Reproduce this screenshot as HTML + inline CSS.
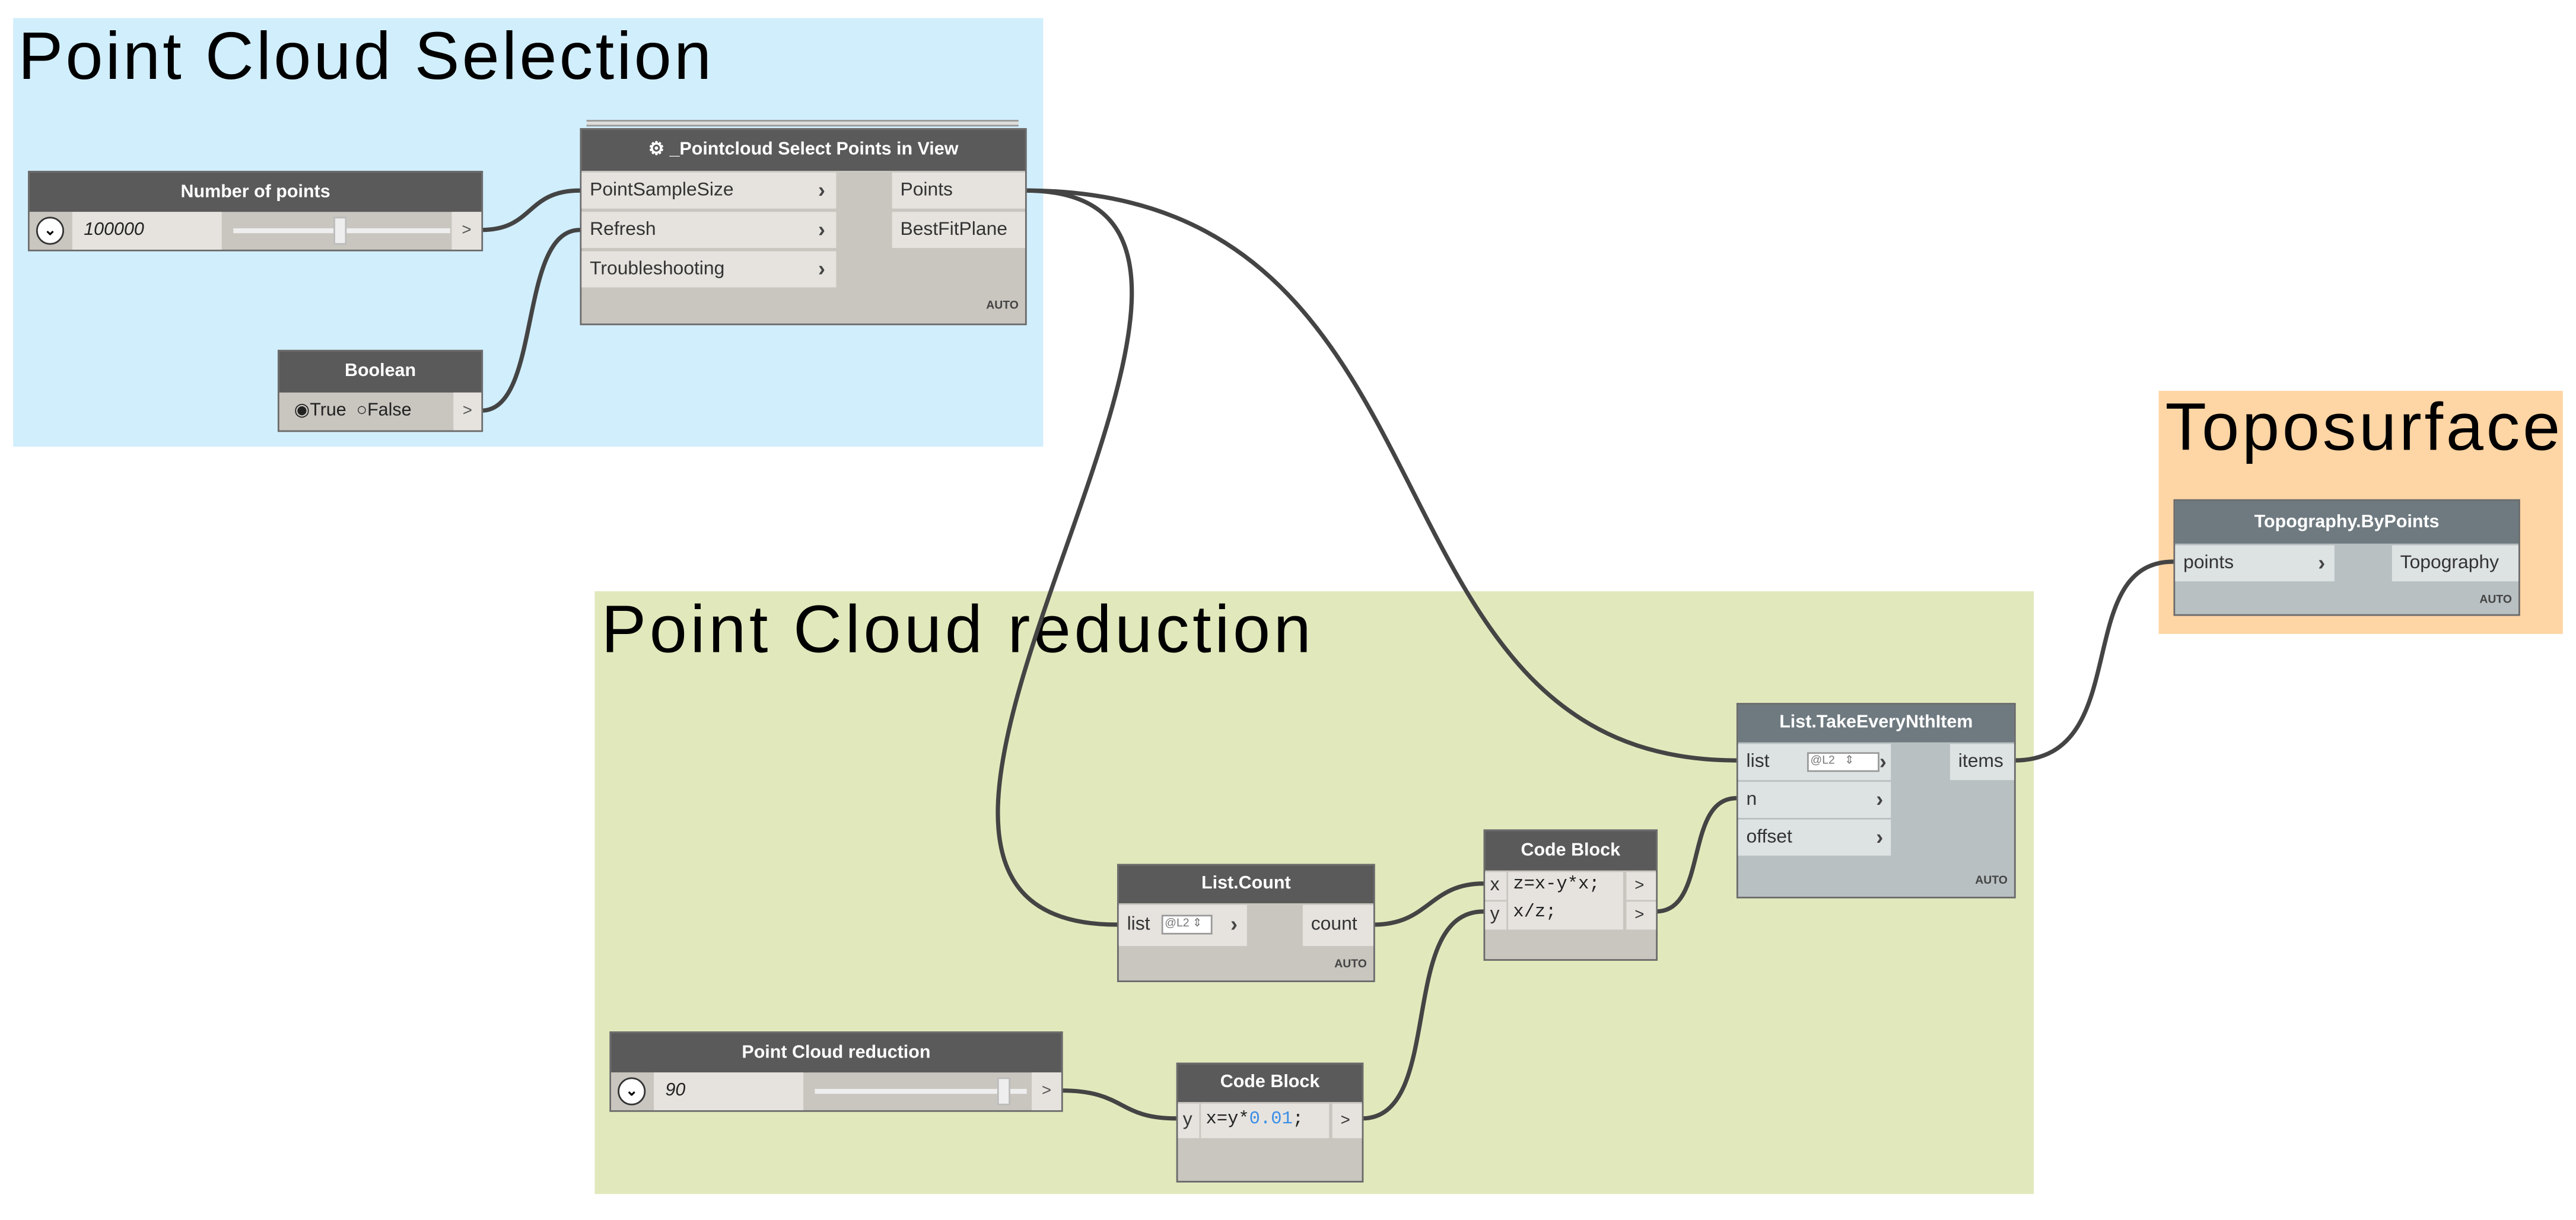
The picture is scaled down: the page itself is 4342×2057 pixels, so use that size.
<!DOCTYPE html>
<html><head><meta charset="utf-8"><style>
html,body{margin:0;padding:0;background:#fff;width:4342px;height:2056px;overflow:hidden}
#s{position:absolute;left:0;top:0;width:1568px;height:743px;transform:scale(2.7691);transform-origin:0 0;font-family:"Liberation Sans",sans-serif}
.a{position:absolute;box-sizing:border-box}
.g{position:absolute}
.t{position:absolute;font-size:41px;color:#000;white-space:nowrap;letter-spacing:1.5px}
.n{position:absolute;box-sizing:border-box;background:#c9c5bf;border:1px solid #6a6a6a}
.nb{background:#b8c0c2}
.h{position:absolute;left:0;right:0;top:0;background:#5a5a5a;color:#fff;font-size:11px;font-weight:bold;text-align:center}
.hb{background:#6e7a80}
.r{position:absolute;background:#e6e3df;font-size:11.5px;color:#333;white-space:nowrap;box-sizing:border-box;padding-left:5px}
.rb{background:#dde2e3}
.auto{position:absolute;right:4px;font-size:7px;font-weight:bold;color:#444}
.ch{position:absolute;font-weight:bold;font-size:13px;color:#444}
.lv{position:absolute;background:#fff;border:1px solid #999;font-size:7px;color:#777;box-sizing:border-box;padding-left:1px;line-height:10px}
.mono{font-family:"Liberation Mono",monospace;font-size:11px}
</style></head><body><div id="s">
<div class="g" style="left:8px;top:11px;width:627px;height:261px;background:#d1eefc"></div>
<div class="t" style="left:11px;top:11px">Point Cloud Selection</div>
<div class="g" style="left:362px;top:360px;width:876px;height:367px;background:#e1e9bc"></div>
<div class="t" style="left:366px;top:360px;letter-spacing:2px">Point Cloud reduction</div>
<div class="g" style="left:1314px;top:238px;width:246px;height:148px;background:#fed5a4"></div>
<div class="t" style="left:1318px;top:237px;letter-spacing:1.7px">Toposurface</div>

<svg class="g" style="left:0;top:0" width="1568" height="743" fill="none" stroke="#444" stroke-width="2.6">
<path d="M293,140 C325,140 320,116 353,116"/>
<path d="M293,250 C330,250 315,140 353,140"/>
<path d="M624,116 C900,116 820,463 1057,463"/>
<path d="M624,116 C830,116 460,563 680,563"/>
<path d="M836,563 C870,563 870,538 903,538"/>
<path d="M829,681 C880,681 850,555 903,555"/>
<path d="M1008,555 C1040,555 1025,486 1057,486"/>
<path d="M1226,463 C1300,463 1260,342 1323,342"/>
<path d="M646,664 C685,664 680,681 716,681"/>
</svg>

<div class="n" style="left:17px;top:104px;width:277px;height:49px">
 <div class="h" style="height:24px;line-height:24px">Number of points</div>
 <div class="a" style="left:0;top:24px;width:26px;height:23px;background:#c9c5bf"><div class="a" style="left:4px;top:3px;width:17px;height:17px;border:1.3px solid #333;border-radius:50%;background:#fff;font-size:9px;text-align:center;line-height:15px;font-weight:bold">⌄</div></div>
 <div class="a" style="left:26px;top:24px;width:91px;height:23px;background:#e6e3df;font-size:11px;font-style:italic;line-height:23px;padding-left:7px;color:#222">100000</div>
 <div class="a" style="left:124px;top:34px;width:132px;height:3px;background:#eee"></div>
 <div class="a" style="left:185px;top:27px;width:8px;height:17px;background:#eee;border:1px solid #bbb"></div>
 <div class="a" style="left:257px;top:24px;width:18px;height:23px;background:#e6e3df;font-size:10px;line-height:23px;text-align:center;color:#555">&gt;</div>
</div>

<div class="n" style="left:169px;top:213px;width:125px;height:50px">
 <div class="h" style="height:25px;line-height:25px">Boolean</div>
 <div class="a" style="left:0;top:25px;width:106px;height:23px;font-size:11px;line-height:23px;padding-left:9px;color:#222">◉True &nbsp;○False</div>
 <div class="a" style="left:106px;top:25px;width:17px;height:23px;background:#e6e3df;font-size:10px;line-height:23px;text-align:center;color:#555">&gt;</div>
</div>

<div class="a" style="left:357px;top:73px;width:263px;height:4px;border-top:1px solid #999;border-bottom:1px solid #999;background:#ddd"></div>
<div class="n" style="left:353px;top:78px;width:272px;height:120px">
 <div class="h" style="height:25px;line-height:25px">⚙ _Pointcloud Select Points in View</div>
 <div class="r" style="left:0;top:26px;width:155px;height:22px;line-height:22px">PointSampleSize</div><div class="ch" style="left:144px;top:29px">›</div>
 <div class="r" style="left:0;top:50px;width:155px;height:22px;line-height:22px">Refresh</div><div class="ch" style="left:144px;top:53px">›</div>
 <div class="r" style="left:0;top:74px;width:155px;height:22px;line-height:22px">Troubleshooting</div><div class="ch" style="left:144px;top:77px">›</div>
 <div class="r" style="left:189px;top:26px;width:81px;height:22px;line-height:22px">Points</div>
 <div class="r" style="left:189px;top:50px;width:81px;height:22px;line-height:22px">BestFitPlane</div>
 <div class="auto" style="top:104px">AUTO</div>
</div>

<div class="n" style="left:680px;top:526px;width:157px;height:72px">
 <div class="h" style="height:23px;line-height:23px">List.Count</div>
 <div class="r" style="left:0;top:24px;width:78px;height:25px;line-height:25px">list</div>
 <div class="lv" style="left:26px;top:30px;width:31px;height:12px">@L2 ⇕</div><div class="ch" style="left:68px;top:28px">›</div>
 <div class="r" style="left:112px;top:24px;width:43px;height:25px;line-height:25px">count</div>
 <div class="auto" style="top:57px">AUTO</div>
</div>

<div class="n" style="left:903px;top:505px;width:106px;height:80px">
 <div class="h" style="height:24px;line-height:24px">Code Block</div>
 <div class="r" style="left:0;top:25px;width:13px;height:17px;line-height:17px;padding-left:3px">x</div>
 <div class="r" style="left:0;top:43px;width:13px;height:17px;line-height:17px;padding-left:3px">y</div>
 <div class="r mono" style="left:14px;top:25px;width:70px;height:35px;line-height:17px;padding-left:3px;color:#222">z=x-y*x;<br>x/z;</div>
 <div class="r" style="left:86px;top:25px;width:18px;height:17px;line-height:17px;font-size:10px">&gt;</div>
 <div class="r" style="left:86px;top:43px;width:18px;height:17px;line-height:17px;font-size:10px">&gt;</div>
</div>

<div class="n" style="left:371px;top:628px;width:276px;height:49px">
 <div class="h" style="height:24px;line-height:24px">Point Cloud reduction</div>
 <div class="a" style="left:0;top:24px;width:26px;height:23px;background:#c9c5bf"><div class="a" style="left:4px;top:3px;width:17px;height:17px;border:1.3px solid #333;border-radius:50%;background:#fff;font-size:9px;text-align:center;line-height:15px;font-weight:bold">⌄</div></div>
 <div class="a" style="left:26px;top:24px;width:91px;height:23px;background:#e6e3df;font-size:11px;font-style:italic;line-height:23px;padding-left:7px;color:#222">90</div>
 <div class="a" style="left:124px;top:34px;width:129px;height:3px;background:#eee"></div>
 <div class="a" style="left:235px;top:27px;width:8px;height:17px;background:#eee;border:1px solid #bbb"></div>
 <div class="a" style="left:256px;top:24px;width:18px;height:23px;background:#e6e3df;font-size:10px;line-height:23px;text-align:center;color:#555">&gt;</div>
</div>

<div class="n" style="left:716px;top:647px;width:114px;height:73px">
 <div class="h" style="height:23px;line-height:23px">Code Block</div>
 <div class="r" style="left:0;top:24px;width:13px;height:21px;line-height:21px;padding-left:3px">y</div>
 <div class="r mono" style="left:14px;top:24px;width:78px;height:21px;line-height:21px;padding-left:3px;color:#222">x=y*<span style="color:#3a8ee6">0.01</span>;</div>
 <div class="r" style="left:94px;top:24px;width:18px;height:21px;line-height:21px;font-size:10px">&gt;</div>
</div>

<div class="n nb" style="left:1057px;top:428px;width:170px;height:119px">
 <div class="h hb" style="height:23px;line-height:23px">List.TakeEveryNthItem</div>
 <div class="r rb" style="left:0;top:24px;width:93px;height:22px;line-height:22px">list</div>
 <div class="lv" style="left:42px;top:29px;width:44px;height:12px">@L2 &nbsp;&nbsp;⇕</div><div class="ch" style="left:86px;top:27px">›</div>
 <div class="r rb" style="left:0;top:47px;width:93px;height:22px;line-height:22px">n</div><div class="ch" style="left:84px;top:50px">›</div>
 <div class="r rb" style="left:0;top:70px;width:93px;height:22px;line-height:22px">offset</div><div class="ch" style="left:84px;top:73px">›</div>
 <div class="r rb" style="left:129px;top:24px;width:39px;height:22px;line-height:22px">items</div>
 <div class="auto" style="top:104px">AUTO</div>
</div>

<div class="n nb" style="left:1323px;top:304px;width:211px;height:71px">
 <div class="h hb" style="height:26px;line-height:26px">Topography.ByPoints</div>
 <div class="r rb" style="left:0;top:27px;width:97px;height:22px;line-height:22px">points</div><div class="ch" style="left:87px;top:30px">›</div>
 <div class="r rb" style="left:132px;top:27px;width:77px;height:22px;line-height:22px">Topography</div>
 <div class="auto" style="top:57px">AUTO</div>
</div>
</div></body></html>
